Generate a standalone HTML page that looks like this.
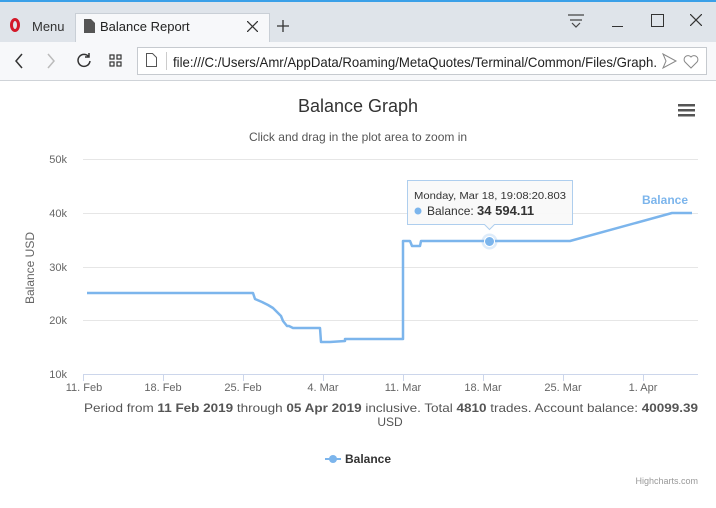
<!DOCTYPE html>
<html><head><meta charset="utf-8"><style>
body{margin:0;width:716px;height:508px;overflow:hidden;background:#fff;font-family:"Liberation Sans",sans-serif;position:relative}
.top{position:absolute;left:0;top:0;width:716px;height:42px;background:#dfe4ea;border-top:2px solid #3aa0e8;box-sizing:border-box}
.tab{position:absolute;left:75px;top:13px;width:195px;height:30px;background:#f7f8fa;border:1px solid #c9cfd6;border-bottom:none;box-sizing:border-box}
.tool{position:absolute;left:0;top:42px;width:716px;height:38px;background:#f7f8fa;border-bottom:1px solid #cfd3d8}
.url{position:absolute;left:137px;top:47px;width:570px;height:28px;background:#fff;border:1px solid #c6cacf;box-sizing:border-box}
.t{position:absolute;white-space:nowrap}
</style></head><body>
<div class="top"></div>
<div class="t" style="left:10px;top:18px;width:10px;height:14px;border:3px solid #d3192a;border-radius:50%;box-sizing:border-box"></div>
<div class="t" style="left:32px;top:19px;font-size:13px;color:#333">Menu</div>
<div class="tab"></div>
<svg class="t" style="left:84px;top:19px" width="11" height="14"><path d="M0 0h7l4 4v10H0z" fill="#555"/></svg>
<div class="t" style="left:100px;top:19px;font-size:13px;color:#222">Balance Report</div>
<svg class="t" style="left:247px;top:21px" width="11" height="11"><path d="M0 0L11 11M11 0L0 11" stroke="#333" stroke-width="1.3"/></svg>
<svg class="t" style="left:277px;top:20px" width="12" height="12"><path d="M6 0v12M0 6h12" stroke="#333" stroke-width="1.3"/></svg>
<svg class="t" style="left:568px;top:14px" width="16" height="14"><path d="M0 1h16M2 6h12M4 9l4 4 4-4" stroke="#444" fill="none" stroke-width="1.2"/></svg>
<div class="t" style="left:612px;top:26px;width:11px;height:1px;background:#333"></div>
<div class="t" style="left:651px;top:14px;width:11px;height:11px;border:1px solid #333"></div>
<svg class="t" style="left:690px;top:14px" width="12" height="12"><path d="M0 0L12 12M12 0L0 12" stroke="#333" stroke-width="1.2"/></svg>
<div class="tool"></div>
<svg class="t" style="left:14px;top:53px" width="10" height="16"><path d="M8 1L2 8l6 7" stroke="#333" fill="none" stroke-width="1.5"/></svg>
<svg class="t" style="left:46px;top:53px" width="10" height="16"><path d="M2 1l6 7-6 7" stroke="#bbb" fill="none" stroke-width="1.5"/></svg>
<svg class="t" style="left:76px;top:52px" width="16" height="16"><path d="M13 5A6 6 0 1 0 14 9M13 1v4H9" stroke="#333" fill="none" stroke-width="1.5"/></svg>
<svg class="t" style="left:109px;top:54px" width="13" height="13"><g fill="none" stroke="#333" stroke-width="1.2"><rect x="1" y="1" width="4" height="4"/><rect x="8" y="1" width="4" height="4"/><rect x="1" y="8" width="4" height="4"/><rect x="8" y="8" width="4" height="4"/></g></svg>
<div class="url"></div>
<svg class="t" style="left:146px;top:53px" width="11" height="14"><path d="M.5.5h6l4 4v9H.5z" stroke="#555" fill="none"/></svg>
<div class="t" style="left:166px;top:52px;width:1px;height:18px;background:#ccc"></div>
<svg class="t" style="left:173px;top:50px" width="490" height="24"><text x="0" y="17" font-size="14" fill="#222" textLength="484" lengthAdjust="spacingAndGlyphs" font-family="Liberation Sans,sans-serif">file:///C:/Users/Amr/AppData/Roaming/MetaQuotes/Terminal/Common/Files/Graph.</text></svg>
<svg class="t" style="left:662px;top:53px" width="40" height="16"><path d="M1 1l13 7-13 7 3-7z" stroke="#888" fill="none"/><path d="M29 15l-6-6a3.5 3.5 0 0 1 6-5 3.5 3.5 0 0 1 6 5z" stroke="#888" fill="none"/></svg>

<svg class="t" style="left:0;top:81px" width="716" height="427" font-family="Liberation Sans,sans-serif">
<g transform="translate(0,-81)">
<text x="358" y="112" text-anchor="middle" font-size="18" fill="#333">Balance Graph</text>
<text x="358" y="141" text-anchor="middle" font-size="12" fill="#555">Click and drag in the plot area to zoom in</text>
<g fill="#555"><rect x="678" y="104" width="17" height="2.5"/><rect x="678" y="109" width="17" height="2.5"/><rect x="678" y="114" width="17" height="2.5"/></g>
<g stroke="#e6e6e6"><path d="M83 159.5H698M83 213.5H698M83 267.5H698M83 320.5H698"/></g>
<path d="M83 374.5H698" stroke="#ccd6eb"/>
<g stroke="#ccd6eb"><path d="M83.5 374v7M163.5 374v7M243.5 374v7M323.5 374v7M403.5 374v7M483.5 374v7M563.5 374v7M643.5 374v7"/></g>
<g font-size="11" fill="#666" text-anchor="end"><text x="67" y="163">50k</text><text x="67" y="217">40k</text><text x="67" y="271">30k</text><text x="67" y="324">20k</text><text x="67" y="378">10k</text></g>
<g font-size="11" fill="#666" text-anchor="middle"><text x="84" y="391">11. Feb</text><text x="163" y="391">18. Feb</text><text x="243" y="391">25. Feb</text><text x="323" y="391">4. Mar</text><text x="403" y="391">11. Mar</text><text x="483" y="391">18. Mar</text><text x="563" y="391">25. Mar</text><text x="643" y="391">1. Apr</text></g>
<text transform="translate(34,268) rotate(-90)" text-anchor="middle" font-size="12" fill="#666">Balance USD</text>
<path d="M87 293H253L255 299L262 302L268 305L273 308L277 312L281 316L283 321L287 326H289L293 328H320L321 342L330 342L345 341V339H403V241H410L412 246H420L421 241H423H470L570 241L672 213H692" fill="none" stroke="#7cb5ec" stroke-width="2.5" stroke-linejoin="round"/>
<circle cx="489.5" cy="241.5" r="8" fill="#7cb5ec" opacity=".25"/><circle cx="489.5" cy="241.5" r="5" fill="#7cb5ec" stroke="#fff"/>
<text x="688" y="204" text-anchor="end" font-size="12" font-weight="bold" fill="#7cb5ec">Balance</text>
<path d="M407.5 180.5h165v44h-78l-5 5-5-5h-77z" fill="#f9f9f9" stroke="#aaccee" opacity=".95"/>
<text x="414" y="199" font-size="10" fill="#333" textLength="152" lengthAdjust="spacingAndGlyphs">Monday, Mar 18, 19:08:20.803</text>
<circle cx="418" cy="211" r="3.5" fill="#7cb5ec"/>
<text x="427" y="215" font-size="12" fill="#333">Balance: <tspan font-weight="bold" font-size="13">34 594.11</tspan></text>
<text x="84" y="412" font-size="12" fill="#555" textLength="614" lengthAdjust="spacingAndGlyphs">Period from <tspan font-weight="bold">11 Feb 2019</tspan> through <tspan font-weight="bold">05 Apr 2019</tspan> inclusive. Total <tspan font-weight="bold">4810</tspan> trades. Account balance: <tspan font-weight="bold">40099.39</tspan></text>
<text x="390" y="426" text-anchor="middle" font-size="12" fill="#555">USD</text>
<path d="M325 459h16" stroke="#7cb5ec" stroke-width="2"/><circle cx="333" cy="459" r="4" fill="#7cb5ec"/>
<text x="345" y="463" font-size="12" font-weight="bold" fill="#333">Balance</text>
<text x="698" y="484" text-anchor="end" font-size="9" fill="#999">Highcharts.com</text>
</g></svg>
</body></html>
